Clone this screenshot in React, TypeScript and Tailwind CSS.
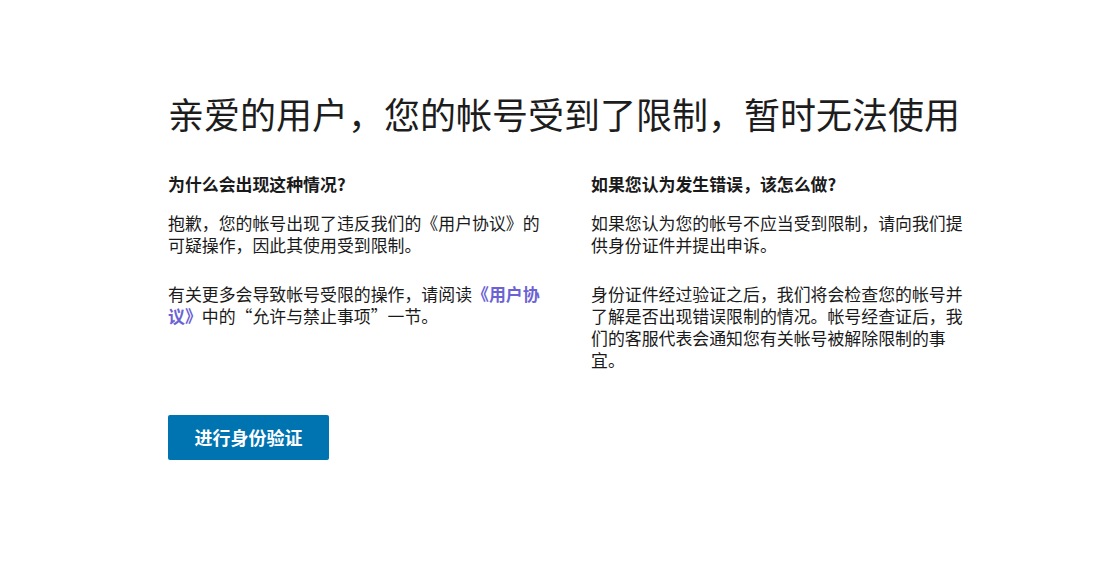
import React from "react";

const font = {
  fontFamily: '"Noto Sans CJK SC", "Microsoft YaHei", "Liberation Sans", sans-serif',
};

export default function App() {
  return (
    <div className="min-h-[574px] w-full bg-white text-[#1a1a1a]" style={font}>
      <main className="pl-[168px] pt-[91px]">
        <h1 className="text-[36px] leading-[45px] font-normal text-[#1d1d1d] whitespace-nowrap">
          亲爱的用户，您的帐号受到了限制，暂时无法使用
        </h1>

        <div className="mt-[37px] grid w-[846px] grid-cols-2">
          <section className="pr-[40px]">
            <h2 className="text-[16.9px] leading-[22px] font-bold">为什么会出现这种情况?</h2>
            <p className="mt-[17px] text-[16.9px] leading-[22px]">
              抱歉，您的帐号出现了违反我们的《用户协议》的可疑操作，因此其使用受到限制。
            </p>
            <p className="mt-[27px] text-[16.9px] leading-[22px]">
              有关更多会导致帐号受限的操作，请阅读
              <a className="font-bold text-[#6b63d4]">《用户协议》</a>
              中的“允许与禁止事项”一节。
            </p>
          </section>
          <section className="pr-[40px]">
            <h2 className="text-[16.9px] leading-[22px] font-bold">如果您认为发生错误，该怎么做?</h2>
            <p className="mt-[17px] text-[16.9px] leading-[22px]">
              如果您认为您的帐号不应当受到限制，请向我们提供身份证件并提出申诉。
            </p>
            <p className="mt-[27px] text-[16.9px] leading-[22px]">
              身份证件经过验证之后，我们将会检查您的帐号并了解是否出现错误限制的情况。帐号经查证后，我们的客服代表会通知您有关帐号被解除限制的事宜。
            </p>
          </section>
        </div>

        <button className="mt-[44px] flex h-[45px] w-[161px] items-center justify-center rounded-[2px] bg-[#0073b1] text-[18px] font-bold text-white">
          进行身份验证
        </button>
      </main>
    </div>
  );
}
